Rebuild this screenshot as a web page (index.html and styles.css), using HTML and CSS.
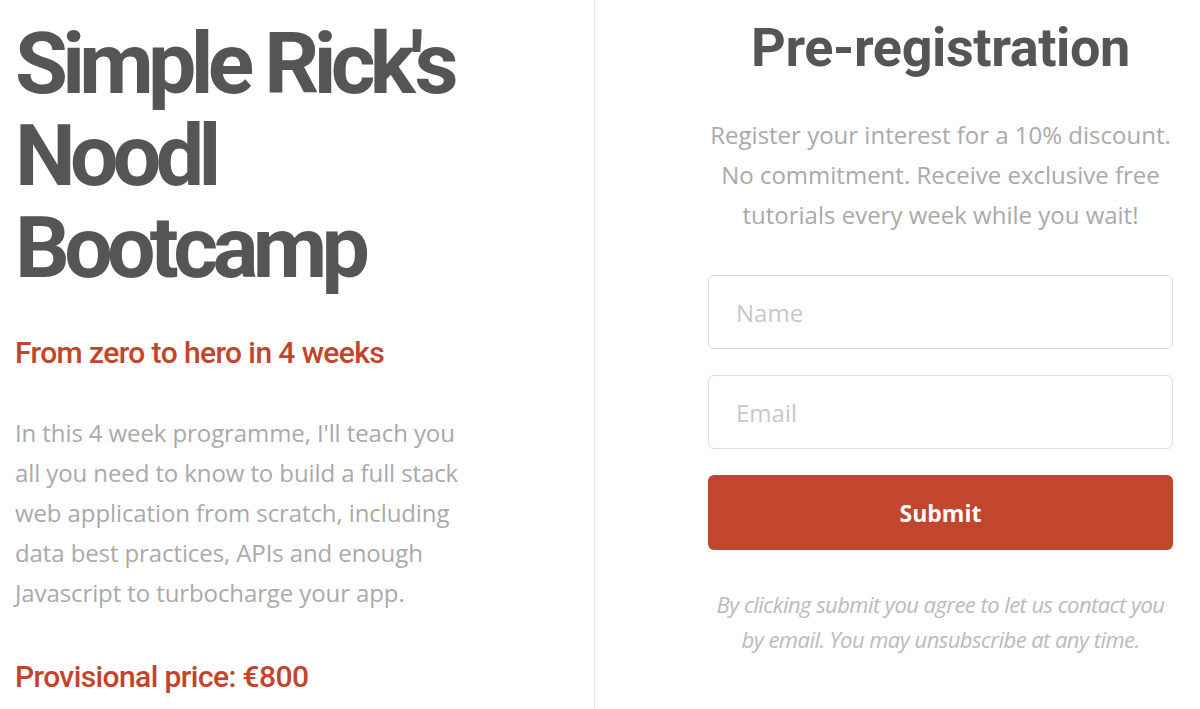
FILE: index.html
```html
<!DOCTYPE html>
<html lang="en">
<head>
    <meta charset="UTF-8">
    <meta name="viewport" content="width=device-width, initial-scale=1.0">
    <title>Simple Rick's Noodl Bootcamp</title>
    <link rel="stylesheet" href="styles.css">
</head>
<body>

<div class="page">
    <div class="info">
        <h1>Simple Rick's Noodl Bootcamp</h1>
        <h3 class="tagline">From zero to hero in 4 weeks</h3>
        <p class="about">In this 4 week programme, I'll teach you all you need to know to build a full stack web application from scratch, including data best practices, APIs and enough Javascript to turbocharge your app.</p>
        <h3 class="price">Provisional price: €800</h3>
    </div>

    <div class="signup">
        <h2>Pre-registration</h2>
        <p class="intro">Register your interest for a 10% discount. No commitment. Receive exclusive free tutorials every week while you wait!</p>
        <form onsubmit="event.preventDefault()">
            <input type="text" name="name" placeholder="Name">
            <input type="email" name="email" placeholder="Email">
            <button type="submit" class="button">Submit</button>
        </form>
        <p class="note">By clicking submit you agree to let us contact you by email. You may unsubscribe at any time.</p>
    </div>
</div>

</body>
</html>
```

FILE: styles.css
```css
body {
    margin: 0;
    font-family: "Open Sans", Arial, sans-serif;
    background-color: #fff;
}
.page {
    display: flex;
    min-height: 709px;
}
.info {
    width: 579px;
    padding-left: 15px;
    border-right: 1px solid #e4e4e4;
}
h1 {
    font-family: Roboto, Arial, sans-serif;
    font-weight: 700;
    font-size: 86px;
    line-height: 92px;
    letter-spacing: -5.7px;
    color: #555;
    width: 470px;
    margin: 18px 0 0 0;
}
.tagline,
.price {
    font-family: Roboto, Arial, sans-serif;
    font-weight: 500;
    font-size: 30px;
    line-height: 36px;
    letter-spacing: -0.6px;
    color: #c4442b;
    margin: 0;
}
.tagline {
    margin-top: 41px;
}
.about {
    font-size: 24px;
    line-height: 40px;
    letter-spacing: -0.1px;
    color: #aaa;
    width: 460px;
    margin: 42px 0 0 0;
}
.price {
    margin-top: 46px;
}
.signup {
    flex: 1;
    padding: 0 27px 0 113px;
    text-align: center;
}
h2 {
    font-family: Roboto, Arial, sans-serif;
    font-weight: 700;
    font-size: 54px;
    line-height: 64px;
    letter-spacing: -0.4px;
    color: #555;
    margin: 16px 0 0 0;
}
.intro {
    font-size: 24px;
    line-height: 40px;
    color: #aaa;
    margin: 35px 0 0 0;
}
form {
    display: flex;
    flex-direction: column;
    gap: 26px;
    margin-top: 40px;
}
input {
    height: 74px;
    box-sizing: border-box;
    padding: 0 27px;
    border: 1px solid #ddd;
    border-radius: 6px;
    font-family: "Open Sans", Arial, sans-serif;
    font-size: 24px;
    color: #555;
}
input::placeholder {
    color: #c8c8c8;
}
.button {
    height: 75px;
    border: none;
    border-radius: 6px;
    background-color: #c2452d;
    color: white;
    font-family: "Open Sans", Arial, sans-serif;
    font-weight: 700;
    font-size: 23px;
}
.note {
    font-style: italic;
    font-size: 22px;
    line-height: 35px;
    color: #bbb;
    letter-spacing: -0.55px;
    margin: 37px 0 0 0;
}
```
